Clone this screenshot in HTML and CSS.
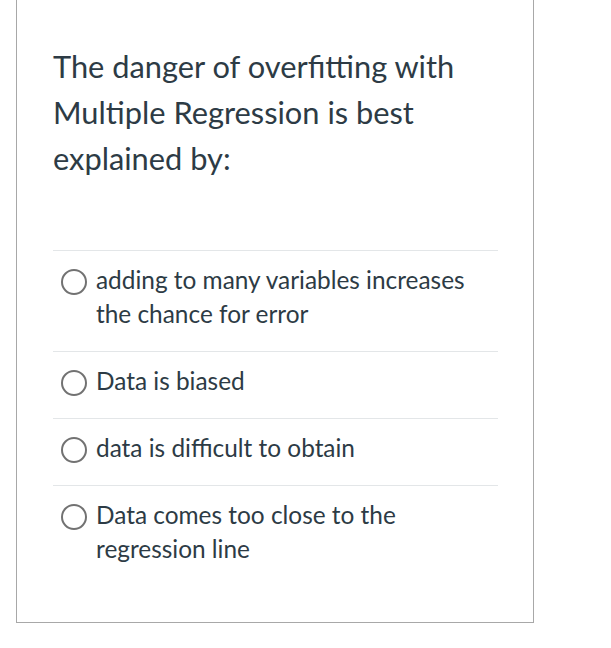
FILE: index.html
```html
<!DOCTYPE html>
<html>
<head>
<meta charset="utf-8">
<link rel="stylesheet" href="styles.css">
</head>
<body>
<div class="card">
  <div class="question">The danger of overfitting with Multiple Regression is best explained by:</div>
  <div class="answers">
    <div class="answer"><span class="radio"></span><span class="label">adding to many variables increases the chance for error</span></div>
    <div class="answer"><span class="radio"></span><span class="label">Data is biased</span></div>
    <div class="answer"><span class="radio"></span><span class="label">data is difficult to obtain</span></div>
    <div class="answer"><span class="radio"></span><span class="label">Data comes too close to the regression line</span></div>
  </div>
</div>
</body>
</html>
```
FILE: styles.css
```css
html, body { margin: 0; padding: 0; background: #fff; }
body { font-family: Lato, "Open Sans", sans-serif; color: #2d3b45; }
.card {
  margin-left: 16px;
  width: 518px;
  height: 623px;
  box-sizing: border-box;
  border: 1px solid #a8a8a8;
  border-top: none;
  padding: 44px 36px 0 36px;
}
.question {
  font-size: 30.8px;
  line-height: 46px;
  width: 420px;
}
.answers { margin-top: 68px; width: 445px; }
.answer {
  display: flex;
  align-items: flex-start;
  border-top: 1px solid #e3e6e8;
  padding: 12px 0 20px 8px;
  font-size: 24.4px;
  line-height: 34px;
}
.answer:last-child { padding-bottom: 0; }
.radio {
  flex: none;
  width: 22px;
  height: 22px;
  border: 2px solid #727272;
  border-radius: 50%;
  margin-top: 6px;
  margin-right: 9px;
}
.label { flex: 1; }
```
